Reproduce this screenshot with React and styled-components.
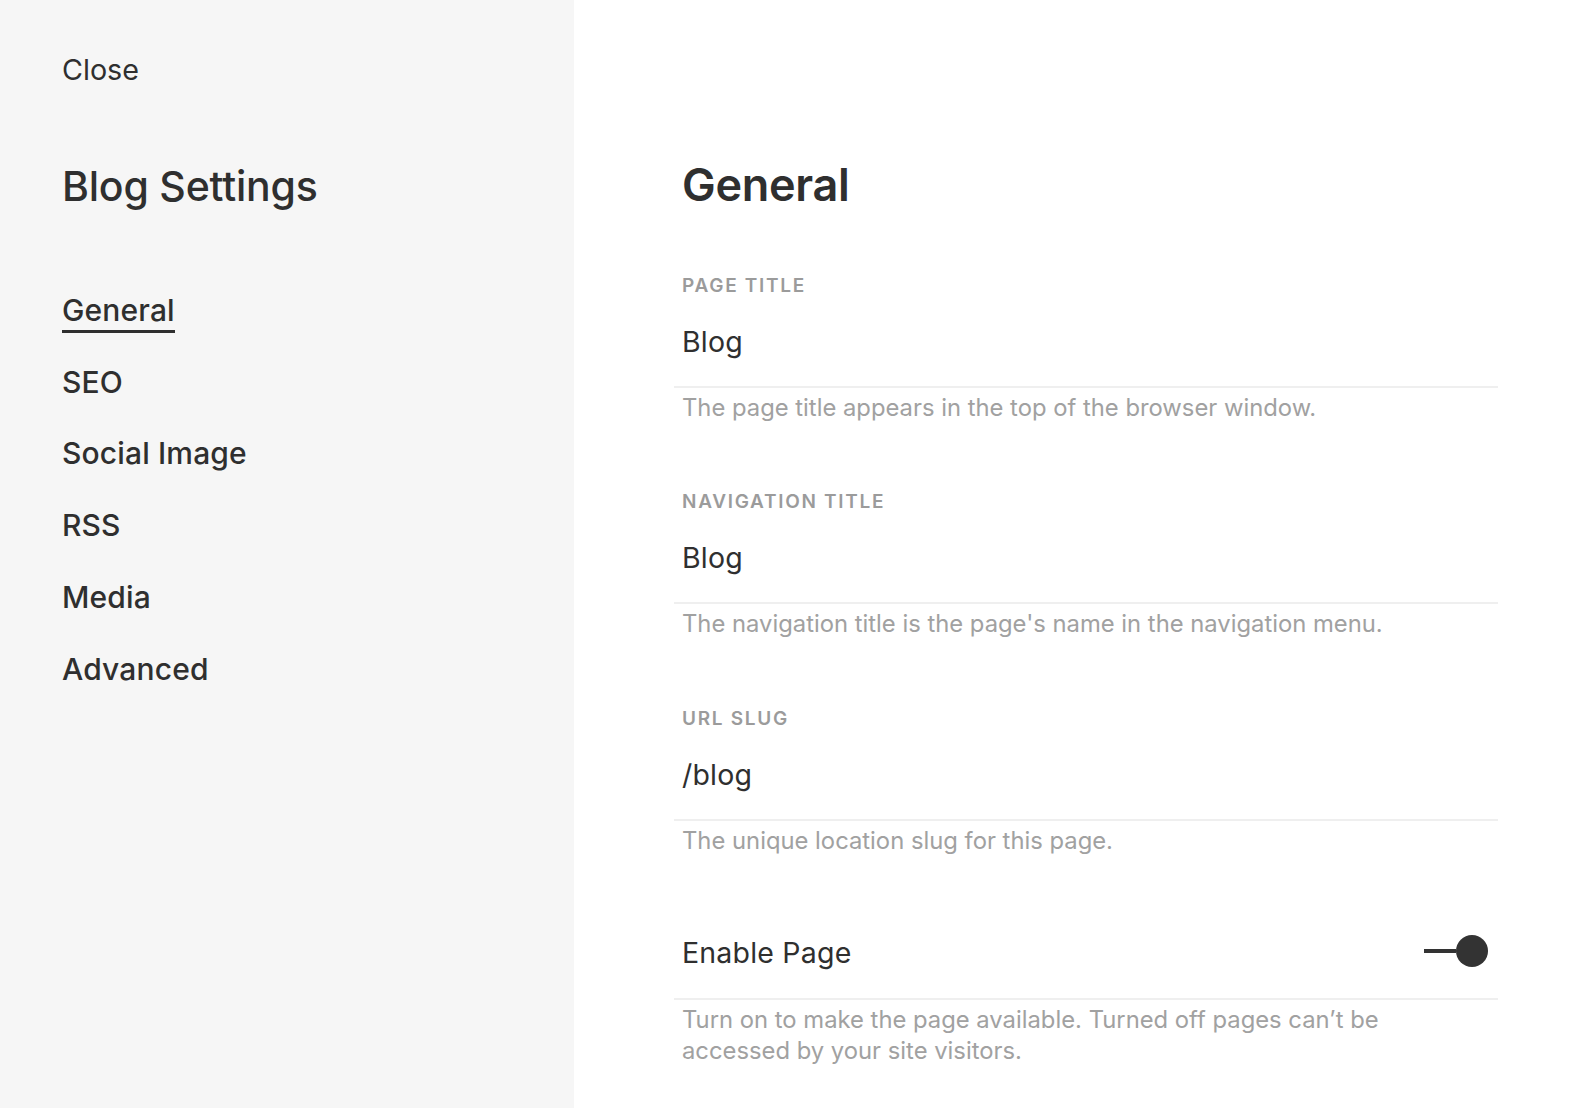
import React from "react";
import styled, { createGlobalStyle } from "styled-components";

const Global = createGlobalStyle`
  html, body { margin: 0; padding: 0; }
  body {
    font-family: Inter, "Noto Sans", "Liberation Sans", sans-serif;
    color: #2f2f2f;
    background: #ffffff;
    -webkit-font-smoothing: antialiased;
  }
  * { box-sizing: border-box; }
`;

const Shell = styled.div`
  display: flex;
  min-height: 100vh;
  height: 1108px;
`;

const Sidebar = styled.aside`
  width: 574px;
  flex: 0 0 574px;
  background: #f6f6f6;
  padding: 53px 0 0 62px;
  display: flex;
  flex-direction: column;
`;

const CloseLink = styled.a`
  font-size: 28.7px;
  line-height: 34px;
  font-weight: 400;
  color: #2f2f2f;
  text-decoration: none;
  cursor: pointer;
  align-self: flex-start;
`;

const SidebarTitle = styled.h1`
  margin: 75px 0 0;
  font-size: 41px;
  line-height: 48px;
  font-weight: 500;
  letter-spacing: -0.2px;
  color: #2f2f2f;
`;

const NavList = styled.nav`
  margin-top: 82.7px;
  display: flex;
  flex-direction: column;
  align-items: flex-start;
  gap: 31.9px;
`;

const NavLink = styled.a`
  font-size: 30px;
  line-height: 34px;
  font-weight: 500;
  letter-spacing: 0.15px;
  color: #2f2f2f;
  text-decoration: none;
  padding-bottom: 3px;
  border-bottom: 3.2px solid ${(p) => (p.$active ? "#2f2f2f" : "transparent")};
  cursor: pointer;
`;

const Main = styled.main`
  flex: 1;
  background: #ffffff;
  padding: 159px 0 0 100px;
`;

const Content = styled.div`
  width: 824px;
  display: flex;
  flex-direction: column;
`;

const Heading = styled.h2`
  margin: 0 0 62.8px;
  padding: 0 8px;
  font-size: 45px;
  line-height: 52px;
  font-weight: 600;
  letter-spacing: -0.3px;
  color: #2f2f2f;
`;

const Field = styled.section`
  display: flex;
  flex-direction: column;
  margin-bottom: ${(p) => p.$gap || 0}px;
`;

const Label = styled.div`
  padding: 0 8px;
  font-size: 19px;
  line-height: 24px;
  font-weight: 600;
  letter-spacing: 1.7px;
  text-transform: uppercase;
  color: #9b9b9b;
`;

const ValueRow = styled.div`
  margin-top: ${(p) => p.$top || 0}px;
  padding: 0 10px 27.2px 8px;
  border-bottom: 2px solid #efefef;
  display: flex;
  align-items: center;
  justify-content: space-between;
`;

const Value = styled.div`
  font-size: 28.5px;
  line-height: 34px;
  font-weight: 400;
  letter-spacing: 0.2px;
  color: #2f2f2f;
`;

const Description = styled.p`
  margin: 5px 0 0;
  padding: 0 8px;
  max-width: 740px;
  font-size: 23.8px;
  line-height: 30.8px;
  font-weight: 400;
  color: #a1a1a1;
`;

const Toggle = styled.button`
  display: flex;
  align-items: center;
  padding: 0;
  margin: 0 0 3.6px;
  border: 0;
  background: transparent;
  cursor: pointer;
`;

const Track = styled.span`
  width: 32px;
  height: 4px;
  background: #333333;
`;

const Knob = styled.span`
  width: 32px;
  height: 32px;
  border-radius: 50%;
  background: #333333;
`;

const navItems = ["General", "SEO", "Social Image", "RSS", "Media", "Advanced"];

const fields = [
  {
    label: "Page Title",
    value: "Blog",
    desc: "The page title appears in the top of the browser window.",
  },
  {
    label: "Navigation Title",
    value: "Blog",
    desc: "The navigation title is the page's name in the navigation menu.",
  },
  {
    label: "URL Slug",
    value: "/blog",
    desc: "The unique location slug for this page.",
  },
];

export default function App() {
  return (
    <>
      <Global />
      <Shell>
        <Sidebar>
          <CloseLink>Close</CloseLink>
          <SidebarTitle>Blog Settings</SidebarTitle>
          <NavList>
            {navItems.map((item, i) => (
              <NavLink key={item} $active={i === 0}>
                {item}
              </NavLink>
            ))}
          </NavList>
        </Sidebar>
        <Main>
          <Content>
            <Heading>General</Heading>
            {fields.map((f, i) => (
              <Field key={f.label} $gap={i < fields.length - 1 ? 66.4 : 78.8}>
                <Label>{f.label}</Label>
                <ValueRow $top={27}>
                  <Value>{f.value}</Value>
                </ValueRow>
                <Description>{f.desc}</Description>
              </Field>
            ))}
            <Field>
              <ValueRow>
                <Value>Enable Page</Value>
                <Toggle aria-label="Enable Page" role="switch" aria-checked="true">
                  <Track />
                  <Knob />
                </Toggle>
              </ValueRow>
              <Description>
                Turn on to make the page available. Turned off pages can’t be accessed by your site visitors.
              </Description>
            </Field>
          </Content>
        </Main>
      </Shell>
    </>
  );
}
